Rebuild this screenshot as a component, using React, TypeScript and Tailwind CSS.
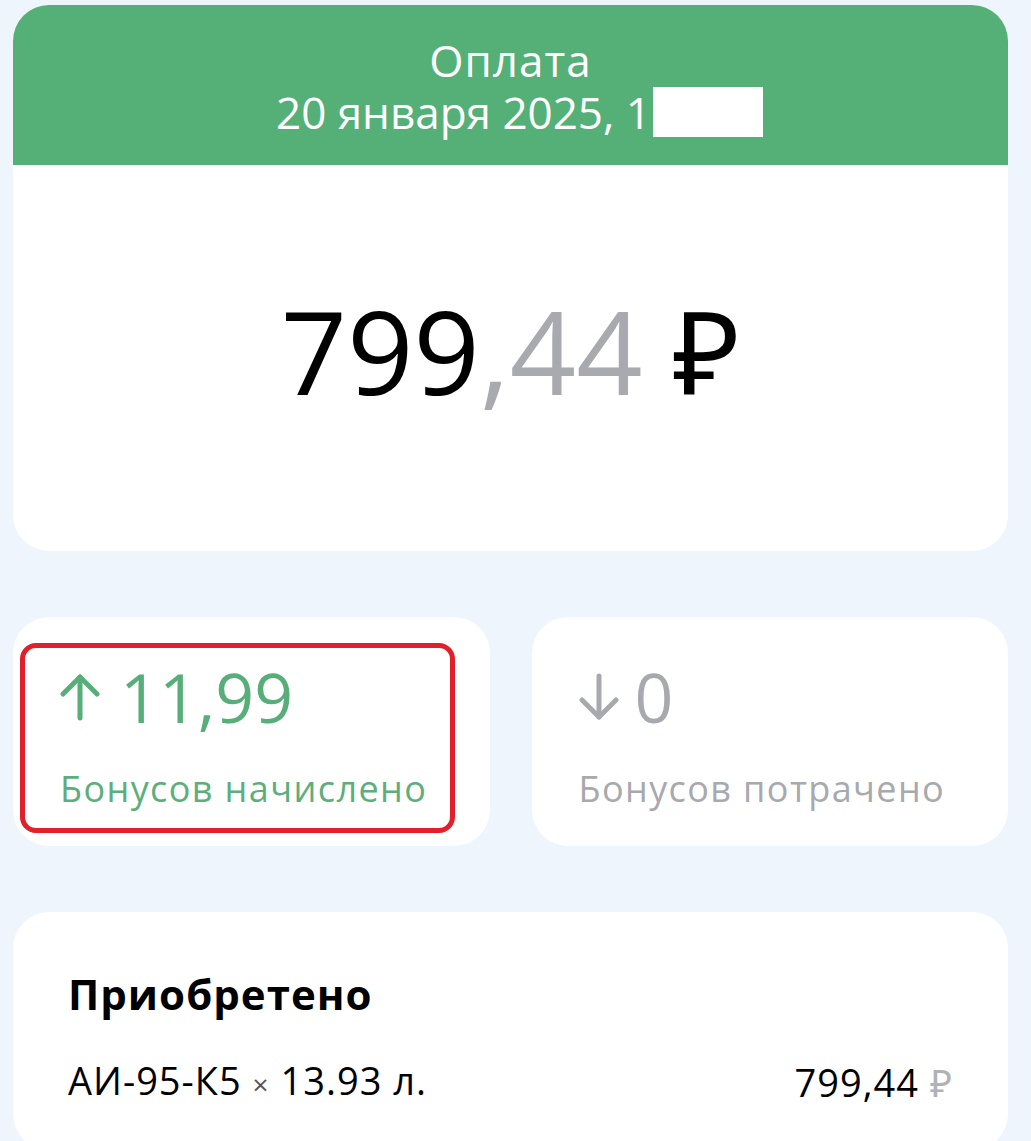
import React from "react";

const sans = { fontFamily: '"Open Sans", "Noto Sans", sans-serif' };

function UpArrow({ className }: { className?: string }) {
  return (
    <svg viewBox="0 0 40 48" className={className} fill="none" stroke="currentColor" strokeWidth="5" strokeLinecap="round" strokeLinejoin="round">
      <path d="M20 45V4" />
      <path d="M3 21L20 4l17 17" />
    </svg>
  );
}

function DownArrow({ className }: { className?: string }) {
  return (
    <svg viewBox="0 0 40 48" className={className} fill="none" stroke="currentColor" strokeWidth="5" strokeLinecap="round" strokeLinejoin="round">
      <path d="M20 3v41" />
      <path d="M3 27l17 17 17-17" />
    </svg>
  );
}

export default function App() {
  return (
    <div className="min-h-[1141px] bg-[#eff5fd] pl-[13px] pr-[23px] pt-[5px] pb-10" style={sans}>
      {/* payment header + amount */}
      <div className="overflow-hidden rounded-[36px] bg-white">
        <div className="flex h-[160px] flex-col items-center justify-center pt-[2px] bg-[#55b078] text-white">
          <div className="text-[44px] leading-[52px] tracking-[1px]">Оплата</div>
          <div className="flex items-center pl-[18px] text-[44px] leading-[52px]">
            20 января 2025, 1
            <span className="ml-[2px] inline-block h-[50px] w-[110px] bg-white" />
          </div>
        </div>
        <div className="flex h-[386px] items-center justify-center pb-[16px]">
          <div className="text-[116px] leading-none text-black">
            799<span className="text-[#a8aaaf]">,44</span> ₽
          </div>
        </div>
      </div>

      {/* bonuses */}
      <div className="mt-[66px] grid grid-cols-2 gap-[42px]">
        <div className="h-[229px] rounded-[36px] bg-white pt-[26px] pl-[7px]">
          <div className="h-[190px] w-[435px] rounded-[16px] border-[5px] border-[#e0202a] pl-[35px] pt-[15px]">
            <div className="flex items-center gap-[20px] text-[#57ae78]">
              <UpArrow className="h-[48px] w-[40px]" />
              <span className="text-[68px] leading-[68px]">11,99</span>
            </div>
            <div className="mt-[36px] text-[36px] leading-[44px] tracking-[1.4px] text-[#5dae7c]">Бонусов начислено</div>
          </div>
        </div>
        <div className="h-[229px] rounded-[36px] bg-white pl-[47px] pt-[46px]">
          <div className="flex items-center gap-[16px] text-[#a7a9ae]">
            <DownArrow className="h-[48px] w-[40px]" />
            <span className="text-[68px] leading-[68px]">0</span>
          </div>
          <div className="mt-[36px] text-[36px] leading-[44px] tracking-[1.4px] text-[#a7a9ae]">Бонусов потрачено</div>
        </div>
      </div>

      {/* purchased */}
      <div className="mt-[66px] rounded-[36px] bg-white px-[55px] pt-[52px] pb-[40px]">
        <div className="text-[42px] font-bold leading-[60px] tracking-[1px] text-black">Приобретено</div>
        <div className="mt-[30px] flex items-center justify-between text-[38px] leading-[52px] tracking-[1px] text-black">
          <span>
            АИ-95-К5 <span className="text-[28px] text-[#555]">×</span> 13.93 л.
          </span>
          <span>
            799,44 <span className="text-[#b0b2b6]">₽</span>
          </span>
        </div>
      </div>
    </div>
  );
}
